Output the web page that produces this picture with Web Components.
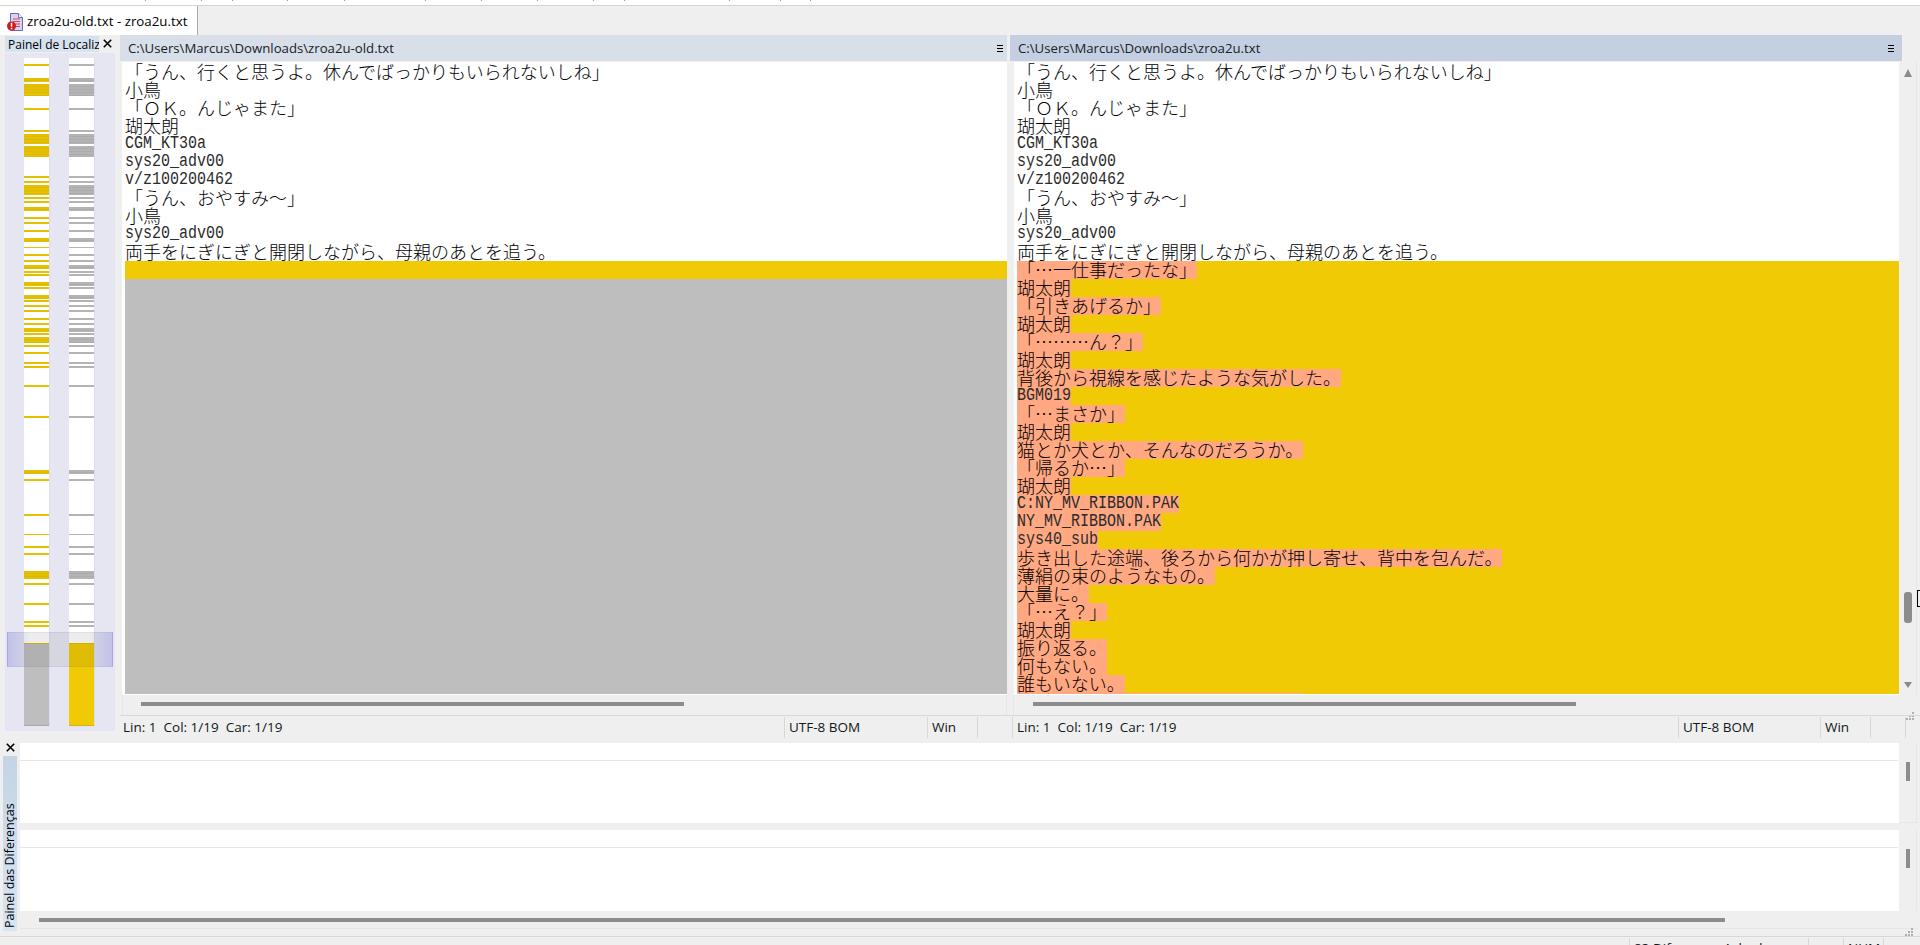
<!DOCTYPE html>
<html>
<head>
<meta charset="utf-8">
<title>zroa2u-old.txt - zroa2u.txt</title>
<style>
  html, body { margin: 0; background: #efefef; overflow: hidden; }
</style>
</head>
<body>
<app-shell>
  <top-strip></top-strip>
  <file-tabs label="zroa2u-old.txt - zroa2u.txt"></file-tabs>
  <main-row>
    <locator-panel title-text="Painel de Localização"></locator-panel>
    <editor-pane side="left" path="C:\Users\Marcus\Downloads\zroa2u-old.txt">
      <code-line>「うん、行くと思うよ。休んでばっかりもいられないしね」</code-line>
      <code-line>小鳥</code-line>
      <code-line>「ＯＫ。んじゃまた」</code-line>
      <code-line>瑚太朗</code-line>
      <code-line>CGM_KT30a</code-line>
      <code-line>sys20_adv00</code-line>
      <code-line>v/z100200462</code-line>
      <code-line>「うん、おやすみ～」</code-line>
      <code-line>小鳥</code-line>
      <code-line>sys20_adv00</code-line>
      <code-line>両手をにぎにぎと開閉しながら、母親のあとを追う。</code-line>
      <code-line state="blank"></code-line>
      <code-line state="gap"></code-line>
      <status-cell slot="status" width="661">Lin: 1&nbsp; Col: 1/19&nbsp; Car: 1/19</status-cell>
      <status-cell slot="status" width="143" sep>UTF-8 BOM</status-cell>
      <status-cell slot="status" width="50" sep>Win</status-cell>
      <status-cell slot="status" width="33" sep></status-cell>
    </editor-pane>
    <editor-pane side="right" path="C:\Users\Marcus\Downloads\zroa2u.txt">
      <code-line>「うん、行くと思うよ。休んでばっかりもいられないしね」</code-line>
      <code-line>小鳥</code-line>
      <code-line>「ＯＫ。んじゃまた」</code-line>
      <code-line>瑚太朗</code-line>
      <code-line>CGM_KT30a</code-line>
      <code-line>sys20_adv00</code-line>
      <code-line>v/z100200462</code-line>
      <code-line>「うん、おやすみ～」</code-line>
      <code-line>小鳥</code-line>
      <code-line>sys20_adv00</code-line>
      <code-line>両手をにぎにぎと開閉しながら、母親のあとを追う。</code-line>
      <code-line state="add">「…一仕事だったな」</code-line>
      <code-line state="add">瑚太朗</code-line>
      <code-line state="add">「引きあげるか」</code-line>
      <code-line state="add">瑚太朗</code-line>
      <code-line state="add">「………ん？」</code-line>
      <code-line state="add">瑚太朗</code-line>
      <code-line state="add">背後から視線を感じたような気がした。</code-line>
      <code-line state="add">BGM019</code-line>
      <code-line state="add">「…まさか」</code-line>
      <code-line state="add">瑚太朗</code-line>
      <code-line state="add">猫とか犬とか、そんなのだろうか。</code-line>
      <code-line state="add">「帰るか…」</code-line>
      <code-line state="add">瑚太朗</code-line>
      <code-line state="add">C:NY_MV_RIBBON.PAK</code-line>
      <code-line state="add">NY_MV_RIBBON.PAK</code-line>
      <code-line state="add">sys40_sub</code-line>
      <code-line state="add">歩き出した途端、後ろから何かが押し寄せ、背中を包んだ。</code-line>
      <code-line state="add">薄絹の束のようなもの。</code-line>
      <code-line state="add">大量に。</code-line>
      <code-line state="add">「…え？」</code-line>
      <code-line state="add">瑚太朗</code-line>
      <code-line state="add">振り返る。</code-line>
      <code-line state="add">何もない。</code-line>
      <code-line state="add">誰もいない。</code-line>
      <code-line state="add" width="288"></code-line>
      <status-cell slot="status" width="666" sep>Lin: 1&nbsp; Col: 1/19&nbsp; Car: 1/19</status-cell>
      <status-cell slot="status" width="142" sep>UTF-8 BOM</status-cell>
      <status-cell slot="status" width="50" sep>Win</status-cell>
      <status-cell slot="status" width="35" sep></status-cell>
      <status-cell slot="status" width="15" sep></status-cell>
    </editor-pane>
  </main-row>
  <diff-panel title-text="Painel das Diferenças">
    <diff-row></diff-row>
    <diff-row></diff-row>
  </diff-panel>
  <status-bar>
    <status-cell width="1629">&nbsp;</status-cell>
    <status-cell width="179" sep>83 Diferenças Achadas</status-cell>
    <status-cell width="35" sep></status-cell>
    <status-cell width="40" sep>NUM</status-cell>
    <status-cell width="36" sep></status-cell>
  </status-bar>
</app-shell>

<script>
const UI_FONT = '"Open Sans", "Liberation Sans", sans-serif';

const CLOSE_ICON = `<svg width="9" height="9" viewBox="0 0 9 9"><path d="M.8.8l7.4 7.4M8.2.8L.8 8.2" stroke="#000" stroke-width="1.6" fill="none"/></svg>`;
const GRIP_ICON = `<svg width="8" height="8" viewBox="0 0 8 8" fill="#b0b0b0"><rect x="6" y="0" width="2" height="2"/><rect x="3" y="3" width="2" height="2"/><rect x="6" y="3" width="2" height="2"/><rect x="0" y="6" width="2" height="2"/><rect x="3" y="6" width="2" height="2"/><rect x="6" y="6" width="2" height="2"/></svg>`;

class AppShell extends HTMLElement {
    constructor(){
        super();
        this.shadow = this.attachShadow({mode: 'open'});
    }
    connectedCallback(){
        this.shadow.innerHTML = `
        <style>
            :host { position: relative; display: flex; flex-direction: column; height: 945px; overflow: hidden; background: #efefef; color: #000; font-family: ${UI_FONT}; }
            /* text cursor caught at the right edge of the window */
            .caret { position: absolute; left: 1917px; top: 590px; width: 3px; height: 17px; box-sizing: border-box; border: 1px solid #000; border-right: 0; }
        </style>
        <slot></slot>
        <div class="caret"></div>`;
    }
}

class TopStrip extends HTMLElement {
    constructor(){
        super();
        this.shadow = this.attachShadow({mode: 'open'});
    }
    connectedCallback(){
        // what is left of the toolbar above the cut: little dark ticks on the first row
        var gaps = [146, 56, 31, 55, 57, 81, 56, 56, 56, 31, 105, 51, 30];
        var ticks = gaps.map(g => `<i style="margin-left:${g - 1}px"></i>`).join('');
        this.shadow.innerHTML = `
        <style>
            :host { display: flex; flex: none; height: 5px; background: #fff; border-bottom: 1px solid #d4d4d4; overflow: hidden; }
            i { display: block; flex: none; width: 1px; height: 1px; background: #9a9a9a; }
        </style>
        ${ticks}`;
    }
}

class FileTabs extends HTMLElement {
    constructor(){
        super();
        this.shadow = this.attachShadow({mode: 'open'});
    }
    connectedCallback(){
        this.shadow.innerHTML = `
        <style>
            :host { display: flex; flex: none; height: 29px; background: #efefef; }
            .tab { display: flex; align-items: center; width: 190px; padding-left: 7px; background: #fff; border-right: 1px solid #a8a8a8; font-size: 13.300px; white-space: nowrap; }
            svg { flex: none; margin-right: 4px; margin-top: 3px; }
        </style>
        <div class="tab">
            <svg width="16" height="18" viewBox="0 0 16 18">
                <path d="M3.5.5h8l4 4v13h-12z" fill="#d8d4ee" stroke="#6f68b4"/>
                <path d="M11.5.5v4h4" fill="#fff" stroke="#6f68b4"/>
                <path d="M6 6h7M6 8.500h7M6 11h7M6 13.500h7" stroke="#d0455a" stroke-width="1.200"/>
                <circle cx="4.500" cy="13" r="4.500" fill="#c8201e"/>
                <rect x="3.800" y="9.800" width="1.500" height="4" fill="#fff"/>
                <rect x="3.800" y="14.800" width="1.500" height="1.500" fill="#fff"/>
            </svg>
            <span>${this.getAttribute('label')}</span>
        </div>`;
    }
}

class MainRow extends HTMLElement {
    constructor(){
        super();
        this.shadow = this.attachShadow({mode: 'open'});
    }
    connectedCallback(){
        this.shadow.innerHTML = `
        <style>
            :host { display: grid; grid-template-columns: 120px 890px 910px; flex: none; height: 706px; }
        </style>
        <slot></slot>`;
    }
}

class LocatorPanel extends HTMLElement {
    constructor(){
        super();
        this.shadow = this.attachShadow({mode: 'open'});
    }
    connectedCallback(){
        this.shadow.innerHTML = `
        <style>
            :host { display: block; padding: 1px 5px 0; }
            .head { display: flex; height: 16px; margin-bottom: 1px; }
            .title { width: 91px; padding-left: 3px; background: linear-gradient(#d3e0ee, #d9e4f0); font-size: 12px; line-height: 17px; white-space: nowrap; overflow: hidden; }
            .close { flex: 1; display: flex; justify-content: center; padding-top: 3px; }
            .body { position: relative; display: flex; gap: 20px; height: 668px; padding: 5px 0 5px 19px; background: #e6e6f2; }
            .view { position: absolute; left: 2px; right: 2px; top: 579px; height: 35px; box-sizing: border-box;
                    border: 1px solid rgba(120,120,210,.35); border-top-color: rgba(120,120,210,.12); border-bottom-color: rgba(120,120,210,.12);
                    background: linear-gradient(90deg, rgba(100,100,210,.28), rgba(0,0,0,.07) 22%, rgba(0,0,0,.07) 78%, rgba(100,100,210,.28)); }
        </style>
        <div class="head">
            <div class="title">${this.getAttribute('title-text')}</div>
            <div class="close">${CLOSE_ICON}</div>
        </div>
        <div class="body">
            <locator-strip variant="old"></locator-strip>
            <locator-strip variant="new"></locator-strip>
            <div class="view"></div>
        </div>`;
    }
}

// page rows of the change marks, as read from the picture
const LOCATOR_MARKS = [[64,66],[78,82],[84,96],[108,110],[130,132],[134,144],[146,157],[176,178],[181,183],[185,195],[197,199],[201,203],[207,211],[217,219],[222,224],[230,232],[238,242],[247,248],[254,256],[260,262],[265,269],[271,273],[274,276],[282,286],[287,289],[295,299],[300,302],[305,307],[310,312],[318,320],[323,325],[328,332],[333,335],[337,343],[345,347],[352,354],[362,364],[366,368],[385,387],[416,418],[470,474],[479,481],[514,516],[534,535],[546,548],[553,555],[571,579],[583,585],[603,605],[621,623],[625,627]];

class LocatorStrip extends HTMLElement {
    constructor(){
        super();
        this.shadow = this.attachShadow({mode: 'open'});
    }
    connectedCallback(){
        var last = 58;
        var bars = LOCATOR_MARKS.map(function(m){
            var html = `<div class="mark" style="margin-top:${m[0] - last}px;height:${m[1] - m[0]}px"></div>`;
            last = m[1];
            return html;
        }).join('');
        this.shadow.innerHTML = `
        <style>
            :host { display: flex; flex-direction: column; width: 25px; height: 668px; background: #fff; box-shadow: 1px 0 0 #dcdcea; }
            .mark { flex: none; background: repeating-linear-gradient(#e4c000 0 2px, #dcba00 2px 3px); }
            :host([variant=new]) .mark { background: repeating-linear-gradient(#b4b4b4 0 2px, #acacac 2px 3px); }
            .block { flex: none; height: 83px; margin-top: ${643 - last}px; box-sizing: border-box; background: #bebebe; border-top: 1px solid #e0bc00; border-bottom: 1px solid #a8a8a8; }
            :host([variant=new]) .block { background: #f0cb05; border-top-color: #e0bc00; border-bottom-color: #d8b400; }
        </style>
        ${bars}
        <div class="block"></div>`;
    }
}

class EditorPane extends HTMLElement {
    constructor(){
        super();
        this.shadow = this.attachShadow({mode: 'open'});
    }
    connectedCallback(){
        var right = this.getAttribute('side') === 'right';
        var vbar = right ? `
            <div class="vbar">
                <svg width="8" height="8" viewBox="0 0 8 8"><path d="M4 0l4 8H0z" fill="#8a8a8a"/></svg>
                <div class="thumb"></div>
                <svg class="down" width="8" height="6" viewBox="0 0 8 6"><path d="M0 0h8L4 6z" fill="#8a8a8a"/></svg>
            </div>` : '';
        var grip = right ? `<div class="grip">${GRIP_ICON}</div>` : '';
        this.shadow.innerHTML = `
        <style>
            :host { display: flex; flex-direction: column; min-width: 0; }
            .head { display: flex; align-items: center; justify-content: space-between; flex: none; height: 26px; box-sizing: border-box; margin-right: 3px; padding: 0 4px 0 8px; background: #d8dfe8; font-size: 13.200px; color: #17202c; white-space: nowrap; }
            :host([side=right]) .head { margin-right: 18px; padding-right: 8px; background: #c4d0e1; }
            .menu { display: flex; flex-direction: column; gap: 2px; width: 6px; }
            .menu i { display: block; height: 1px; background: #000; }
            .mid { display: flex; flex: none; height: 633px; margin-top: 1px; margin-left: 2px; margin-right: 3px; }
            :host([side=right]) .mid { margin-left: 4px; }
            .text { flex: 1; min-width: 0; box-sizing: border-box; padding: 1px 0 1px 3px; background: #fff; }
            .lines { display: flex; flex-direction: column; height: 100%; overflow: hidden; }
            .vbar { display: flex; flex-direction: column; align-items: center; flex: none; width: 18px; padding: 7px 0; box-sizing: border-box; border-right: 1px solid #e6e6e6; }
            .vbar svg { flex: none; }
            .vbar .thumb { flex: none; width: 8px; height: 31px; margin-top: 515px; border-radius: 3px; background: #8c8c8c; }
            .vbar .down { margin-top: auto; }
            .hbar { display: flex; flex: none; height: 20px; box-sizing: border-box; margin-left: 2px; margin-right: 3px; padding-top: 7px; padding-left: 18px; border-left: 1px solid #e6e6e6; border-right: 1px solid #e6e6e6; }
            :host([side=right]) .hbar { margin-left: 3px; margin-right: 0; padding-left: 19px; border-right: 0; }
            .hthumb { flex: none; width: 543px; height: 4px; background: #8c8c8c; }
            .grip { margin-left: auto; margin-top: 1px; margin-right: 6px; }
            .status { display: flex; flex: none; height: 26px; box-sizing: border-box; border-top: 1px solid #d8d8d8; padding-left: 3px; }
            :host([side=right]) .status { padding-left: 2px; }
        </style>
        <div class="head"><span>${this.getAttribute('path')}</span><div class="menu"><i></i><i></i><i></i></div></div>
        <div class="mid">
            <div class="text"><div class="lines"><slot></slot></div></div>
            ${vbar}
        </div>
        <div class="hbar"><div class="hthumb"></div>${grip}</div>
        <div class="status"><slot name="status"></slot></div>`;
    }
}

class CodeLine extends HTMLElement {
    constructor(){
        super();
        this.shadow = this.attachShadow({mode: 'open'});
    }
    connectedCallback(){
        var text = this.textContent;
        // the Latin lines are half width, tall and narrow, so squeeze a mono font to 9px a cell
        var latin = /^[\x20-\x7e]+$/.test(text);
        var width = this.getAttribute('width');
        var box = latin ? `style="width:${text.length * 9}px"` : (width ? `style="width:${width}px"` : '');
        this.shadow.innerHTML = `
        <style>
            :host { display: block; flex: none; height: 18px; color: #000; }
            :host([state=add]) { background: #f0cb05; }
            :host([state=blank]) { background: #f0cb05; }
            :host([state=gap]) { flex: 1; background: #bebebe; }
            .t { display: inline-block; vertical-align: top; height: 18px; white-space: pre; font: 300 18px/18px "Noto Sans CJK JP", sans-serif; }
            :host([state=add]) .t { background: #ffa882; }
            .s { display: inline-block; vertical-align: top; margin-top: -1px; }
            .latin { color: #2b2b2b; font: 400 18px/18px "Liberation Mono", monospace; transform: scaleX(.8333); transform-origin: 0 0; }
        </style>
        <span class="t" ${box}><span class="s ${latin ? 'latin' : ''}"><slot></slot></span></span>`;
    }
}

class StatusBar extends HTMLElement {
    constructor(){
        super();
        this.shadow = this.attachShadow({mode: 'open'});
    }
    connectedCallback(){
        this.shadow.innerHTML = `
        <style>
            :host { display: flex; flex: none; height: 25px; border-top: 1px solid #d8d8d8; }
        </style>
        <slot></slot>`;
    }
}

class StatusCell extends HTMLElement {
    constructor(){
        super();
        this.shadow = this.attachShadow({mode: 'open'});
    }
    connectedCallback(){
        this.style.width = this.getAttribute('width') + 'px';
        this.shadow.innerHTML = `
        <style>
            :host { display: block; flex: none; box-sizing: border-box; height: 21px; margin-top: 1px; font-size: 13.500px; line-height: 21px; color: #101820; white-space: nowrap; overflow: hidden; }
            :host([sep]) { border-left: 1px solid #d8d8d8; padding-left: 4px; }
        </style>
        <slot></slot>`;
    }
}

class DiffPanel extends HTMLElement {
    constructor(){
        super();
        this.shadow = this.attachShadow({mode: 'open'});
    }
    connectedCallback(){
        this.shadow.innerHTML = `
        <style>
            :host { display: flex; flex: none; height: 195px; }
            .side { display: flex; flex-direction: column; align-items: center; flex: none; width: 20px; padding-top: 1px; box-sizing: border-box; }
            .close { display: flex; justify-content: center; height: 14px; padding-top: 1px; box-sizing: border-box; }
            .title { width: 14px; height: 175px; box-sizing: border-box; padding-top: 3px; background: linear-gradient(#d8e6f3, #c3d4e4); writing-mode: vertical-rl; transform: rotate(180deg); font-size: 12.500px; line-height: 14px; white-space: nowrap; overflow: hidden; }
            .rows { display: flex; flex-direction: column; flex: 1; min-width: 0; padding-top: 2px; }
            .hbar { display: flex; flex: none; height: 18px; padding: 7px 0 0 19px; box-sizing: border-box; border-bottom: 1px solid #e6e6e6; margin-right: 3px; }
            .hthumb { flex: none; width: 1686px; height: 4px; background: #8c8c8c; }
            .grip { margin-left: auto; margin-top: 1px; margin-right: 4px; }
        </style>
        <div class="side">
            <div class="close">${CLOSE_ICON}</div>
            <div class="title">${this.getAttribute('title-text')}</div>
        </div>
        <div class="rows">
            <slot></slot>
            <div class="hbar"><div class="hthumb"></div><div class="grip">${GRIP_ICON}</div></div>
        </div>`;
    }
}

class DiffRow extends HTMLElement {
    constructor(){
        super();
        this.shadow = this.attachShadow({mode: 'open'});
    }
    connectedCallback(){
        this.shadow.innerHTML = `
        <style>
            :host { display: flex; flex: none; height: 80px; margin-bottom: 7px; }
            :host(:last-of-type) { height: 81px; margin-bottom: 0; }
            .box { flex: 1; min-width: 0; background: #fff; }
            .box div { height: 17px; border-bottom: 1px solid #e6e6e6; margin-right: 1px; }
            .vbar { flex: none; width: 18px; margin-right: 3px; box-sizing: border-box; padding: 19px 0 0 7px; border-right: 1px solid #e6e6e6; border-bottom: 1px solid #e6e6e6; }
            :host(:last-of-type) .vbar { border-bottom: 0; }
            .thumb { width: 4px; height: 19px; background: #8c8c8c; }
        </style>
        <div class="box"><div></div></div>
        <div class="vbar"><div class="thumb"></div></div>`;
    }
}

customElements.define('app-shell', AppShell);
customElements.define('top-strip', TopStrip);
customElements.define('file-tabs', FileTabs);
customElements.define('main-row', MainRow);
customElements.define('locator-panel', LocatorPanel);
customElements.define('locator-strip', LocatorStrip);
customElements.define('editor-pane', EditorPane);
customElements.define('code-line', CodeLine);
customElements.define('status-bar', StatusBar);
customElements.define('status-cell', StatusCell);
customElements.define('diff-panel', DiffPanel);
customElements.define('diff-row', DiffRow);
</script>
</body>
</html>
